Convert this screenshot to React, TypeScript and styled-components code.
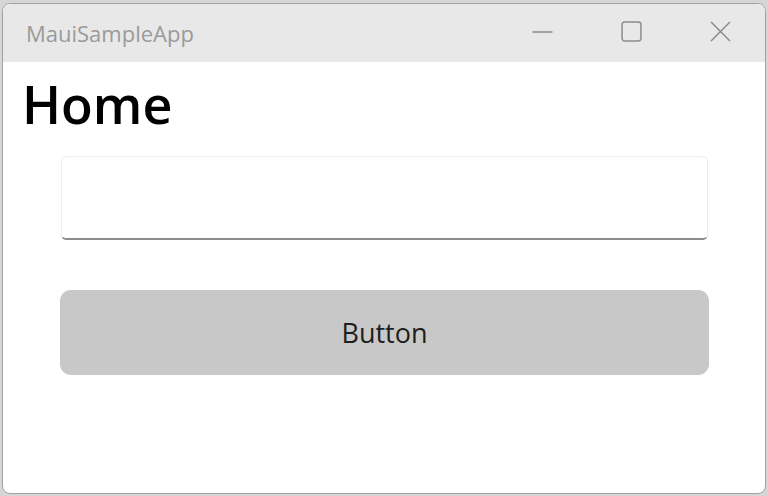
import React from 'react'
import styled, { createGlobalStyle } from 'styled-components'

const GlobalStyle = createGlobalStyle`
  html, body {
    margin: 0;
    padding: 0;
    background: #d6d6d6;
  }
  body {
    width: 768px;
    height: 496px;
    overflow: hidden;
  }
`

const Desktop = styled.div`
  width: 768px;
  height: 496px;
  box-sizing: border-box;
  padding: 3px 2px 2px 2px;
  display: flex;
`

const Window = styled.div`
  flex: 1;
  display: flex;
  flex-direction: column;
  background: #ffffff;
  border: 1px solid #a2a2a2;
  border-radius: 8px;
  overflow: hidden;
  font-family: 'Open Sans', 'Noto Sans', sans-serif;
`

const TitleBar = styled.div`
  height: 58px;
  flex-shrink: 0;
  display: flex;
  align-items: center;
  background: #e8e8e8;
`

const Title = styled.div`
  flex: 1;
  padding-left: 23px;
  padding-bottom: 1px;
  font-size: 22px;
  color: #9a9a9a;
`

const CaptionButton = styled.div`
  width: 89px;
  height: 100%;
  display: flex;
  align-items: center;
  justify-content: center;
  padding-bottom: 4px;
  box-sizing: border-box;

  svg {
    width: 21px;
    height: 21px;
    stroke: #8a8a8a;
    stroke-width: 1.4;
    fill: none;
  }
`

const Content = styled.div`
  flex: 1;
  display: flex;
  flex-direction: column;
`

const Heading = styled.h1`
  margin: 6px 0 0 19px;
  font-size: 52px;
  font-weight: 600;
  line-height: 72px;
  color: #000;
`

const Entry = styled.input`
  margin: 16px 57px 0 58px;
  height: 84px;
  box-sizing: border-box;
  border: 1px solid #ececec;
  border-bottom: 2px solid #8c8c8c;
  border-radius: 5px;
  background: #fff;
  outline: none;
  font-family: inherit;
  font-size: 20px;
  padding: 0 12px;
`

const Button = styled.button`
  margin: 50px 56px 0 57px;
  height: 85px;
  border: none;
  border-radius: 11px;
  background: #c8c8c8;
  color: #1e1e1e;
  font-family: inherit;
  font-size: 27px;
  cursor: pointer;
`

const App = () => {
  return (
    <>
      <GlobalStyle />
      <Desktop>
        <Window>
          <TitleBar>
            <Title>MauiSampleApp</Title>
            <CaptionButton>
              <svg viewBox="0 0 20 20">
                <path d="M0.5 10.5 H19.5" />
              </svg>
            </CaptionButton>
            <CaptionButton>
              <svg viewBox="0 0 20 20">
                <rect x="1" y="1" width="18" height="18" rx="2.5" />
              </svg>
            </CaptionButton>
            <CaptionButton>
              <svg viewBox="0 0 20 20">
                <path d="M1 1 L19 19 M19 1 L1 19" />
              </svg>
            </CaptionButton>
          </TitleBar>
          <Content>
            <Heading>Home</Heading>
            <Entry />
            <Button>Button</Button>
          </Content>
        </Window>
      </Desktop>
    </>
  )
}

export default App
